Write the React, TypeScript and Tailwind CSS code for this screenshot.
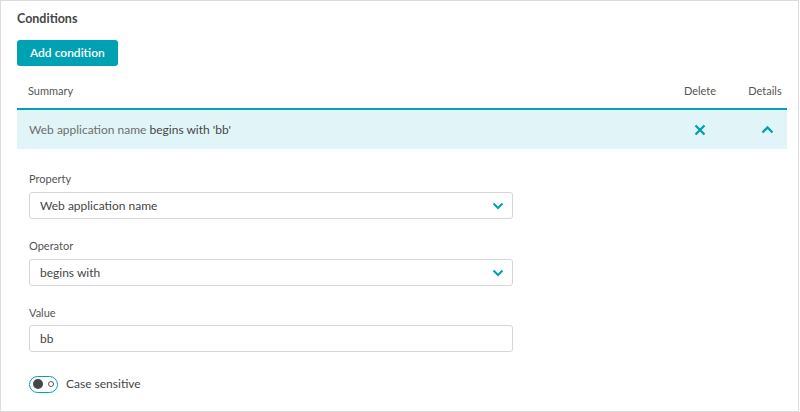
import { useState } from "react";

const font = { fontFamily: "Lato, 'Open Sans', sans-serif" };

function ChevronDown() {
  return (
    <svg width="12" height="8" viewBox="0 0 12 8" className="text-[#00a1b2]">
      <path d="M1.5 1.5 L6 6 L10.5 1.5" fill="none" stroke="currentColor" strokeWidth="2" />
    </svg>
  );
}

function SelectField({ label, value }: { label: string; value: string }) {
  return (
    <div className="flex flex-col">
      <label className="text-[11px] leading-[14px] text-[#555]">{label}</label>
      <div className="mt-[6px] flex h-[27px] w-[484px] items-center justify-between rounded-[3px] border border-[#d6d6d6] pl-[10px] pr-[8px] text-[12px] text-[#454646]">
        <span>{value}</span>
        <ChevronDown />
      </div>
    </div>
  );
}

export default function App() {
  const [caseSensitive, setCaseSensitive] = useState(false);

  return (
    <div style={font} className="h-[412px] w-[799px] border border-[#dcdcdc] bg-white px-[16px] text-[#454646]">
      <h2 className="pt-[10px] text-[12.5px] font-bold leading-[16px] text-[#454646]">Conditions</h2>
      <button className="mt-[13px] h-[26px] rounded-[3px] bg-[#00a1b2] px-[13px] text-[12px] font-semibold text-white">
        Add condition
      </button>

      <div className="mt-[12px] w-[770px]">
        <div className="mb-[4px] flex h-[26px] items-center text-[11px] text-[#555]">
          <div className="flex-1 pl-[11px]">Summary</div>
          <div className="w-[62px] text-center">Delete</div>
          <div className="ml-[12px] w-[44px] text-center">Details</div>
        </div>
        <div className="flex h-[41px] items-center border-t-2 border-[#00a1b2] bg-[#e1f5f8] text-[12px]">
          <div className="flex-1 pl-[12px] text-[#6d6d6d]">
            Web application name <span className="text-[#454646]">begins with 'bb'</span>
          </div>
          <div className="flex w-[62px] justify-center">
            <svg width="12" height="12" viewBox="0 0 12 12">
              <path d="M1.5 1.5 L10.5 10.5 M10.5 1.5 L1.5 10.5" stroke="#00a1b2" strokeWidth="2.4" />
            </svg>
          </div>
          <div className="ml-[12px] flex w-[44px] justify-center pl-[4px]">
            <svg width="13" height="8" viewBox="0 0 13 8">
              <path d="M1.5 6.5 L6.5 1.5 L11.5 6.5" fill="none" stroke="#00a1b2" strokeWidth="2.4" />
            </svg>
          </div>
        </div>

        <div className="flex flex-col gap-[20px] pl-[12px] pt-[23px]">
          <SelectField label="Property" value="Web application name" />
          <SelectField label="Operator" value="begins with" />
          <div className="flex flex-col">
            <label className="text-[11px] leading-[14px] text-[#555]">Value</label>
            <div className="mt-[5px] flex h-[27px] w-[484px] items-center rounded-[3px] border border-[#d6d6d6] pl-[10px] text-[12px] text-[#454646]">
              bb
            </div>
          </div>
          <div className="mt-[3px] flex items-center gap-[8px]">
            <button
              onClick={() => setCaseSensitive(!caseSensitive)}
              className="flex h-[17px] w-[29px] items-center justify-between rounded-full border-[1.5px] border-[#00a1b2] px-[3px]"
            >
              <span className="h-[10px] w-[10px] rounded-full bg-[#454646]" />
              <span className="h-[6px] w-[6px] rounded-full border border-[#555]" />
            </button>
            <span className="text-[12px] text-[#454646]">Case sensitive</span>
          </div>
        </div>
      </div>
    </div>
  );
}
